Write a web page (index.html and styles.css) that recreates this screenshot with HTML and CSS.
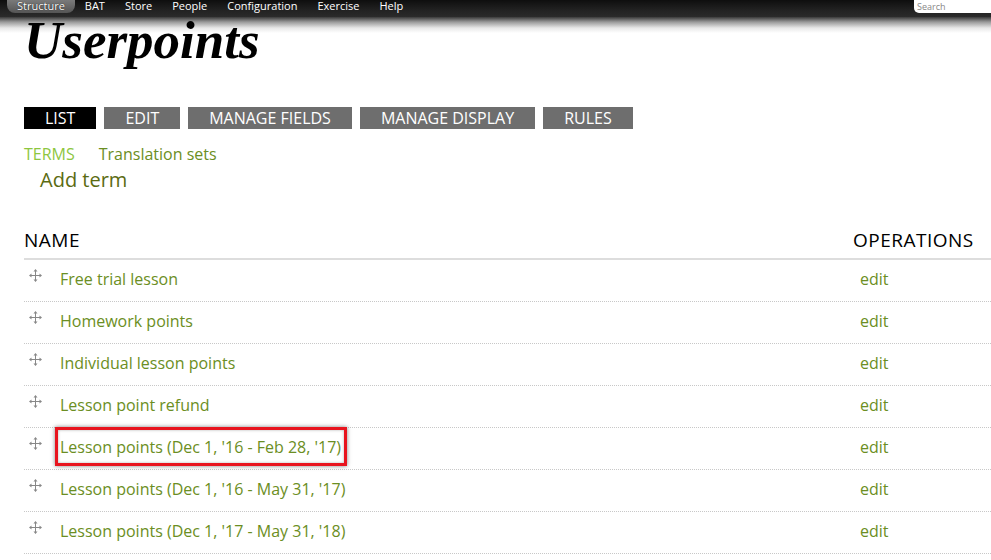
FILE: index.html
```html
<!DOCTYPE html>
<html lang="en">
<head>
  <meta charset="UTF-8">
  <title>Userpoints</title>
  <link rel="stylesheet" href="styles.css">
</head>
<body>
  <!-- Admin toolbar -->
  <div class="toolbar">
    <ul class="toolbar-menu">
      <li class="active">Structure</li>
      <li>BAT</li>
      <li>Store</li>
      <li>People</li>
      <li>Configuration</li>
      <li>Exercise</li>
      <li>Help</li>
    </ul>
    <input class="toolbar-search" type="text" placeholder="Search">
  </div>

  <div class="page">
    <h1 class="page-title">Userpoints</h1>

    <ul class="tabs">
      <li class="active">LIST</li>
      <li>EDIT</li>
      <li>MANAGE FIELDS</li>
      <li>MANAGE DISPLAY</li>
      <li>RULES</li>
    </ul>

    <ul class="subtabs">
      <li class="active">TERMS</li>
      <li>Translation sets</li>
    </ul>
    <div class="action-link">Add term</div>

    <div class="terms">
      <div class="terms-head">
        <div>NAME</div>
        <div>OPERATIONS</div>
      </div>
      <div class="term-row">
        <div class="term-name"><svg class="drag" viewBox="0 0 13 13"><path d="M6.5 1v11M1 6.5h11"/><path class="tip" d="M6.5 0l2 2.5h-4zM6.5 13l2-2.5h-4zM0 6.5l2.5-2v4zM13 6.5l-2.5-2v4z"/></svg><a>Free trial lesson</a></div>
        <div class="term-ops"><a>edit</a></div>
      </div>
      <div class="term-row">
        <div class="term-name"><svg class="drag" viewBox="0 0 13 13"><path d="M6.5 1v11M1 6.5h11"/><path class="tip" d="M6.5 0l2 2.5h-4zM6.5 13l2-2.5h-4zM0 6.5l2.5-2v4zM13 6.5l-2.5-2v4z"/></svg><a>Homework points</a></div>
        <div class="term-ops"><a>edit</a></div>
      </div>
      <div class="term-row">
        <div class="term-name"><svg class="drag" viewBox="0 0 13 13"><path d="M6.5 1v11M1 6.5h11"/><path class="tip" d="M6.5 0l2 2.5h-4zM6.5 13l2-2.5h-4zM0 6.5l2.5-2v4zM13 6.5l-2.5-2v4z"/></svg><a>Individual lesson points</a></div>
        <div class="term-ops"><a>edit</a></div>
      </div>
      <div class="term-row">
        <div class="term-name"><svg class="drag" viewBox="0 0 13 13"><path d="M6.5 1v11M1 6.5h11"/><path class="tip" d="M6.5 0l2 2.5h-4zM6.5 13l2-2.5h-4zM0 6.5l2.5-2v4zM13 6.5l-2.5-2v4z"/></svg><a>Lesson point refund</a></div>
        <div class="term-ops"><a>edit</a></div>
      </div>
      <div class="term-row">
        <div class="term-name"><svg class="drag" viewBox="0 0 13 13"><path d="M6.5 1v11M1 6.5h11"/><path class="tip" d="M6.5 0l2 2.5h-4zM6.5 13l2-2.5h-4zM0 6.5l2.5-2v4zM13 6.5l-2.5-2v4z"/></svg><a class="marked">Lesson points (Dec 1, '16 - Feb 28, '17)</a></div>
        <div class="term-ops"><a>edit</a></div>
      </div>
      <div class="term-row">
        <div class="term-name"><svg class="drag" viewBox="0 0 13 13"><path d="M6.5 1v11M1 6.5h11"/><path class="tip" d="M6.5 0l2 2.5h-4zM6.5 13l2-2.5h-4zM0 6.5l2.5-2v4zM13 6.5l-2.5-2v4z"/></svg><a>Lesson points (Dec 1, '16 - May 31, '17)</a></div>
        <div class="term-ops"><a>edit</a></div>
      </div>
      <div class="term-row">
        <div class="term-name"><svg class="drag" viewBox="0 0 13 13"><path d="M6.5 1v11M1 6.5h11"/><path class="tip" d="M6.5 0l2 2.5h-4zM6.5 13l2-2.5h-4zM0 6.5l2.5-2v4zM13 6.5l-2.5-2v4z"/></svg><a>Lesson points (Dec 1, '17 - May 31, '18)</a></div>
        <div class="term-ops"><a>edit</a></div>
      </div>
    </div>
  </div>
</body>
</html>
```

FILE: styles.css
```css
body {
  margin: 0;
  font-family: "Open Sans", Arial, sans-serif;
  background: #fff;
  overflow: hidden;
}

ul {
  list-style: none;
  margin: 0;
  padding: 0;
}

/* Toolbar */
.toolbar {
  height: 17px;
  background: linear-gradient(#0e0e0e, #222 60%, #2b2b2b);
  display: flex;
  justify-content: space-between;
  align-items: flex-start;
}

.toolbar-menu {
  display: flex;
  padding-left: 7px;
}

.toolbar-menu li {
  color: #fff;
  font-size: 11px;
  line-height: 11px;
  padding: 0 10px;
  height: 13px;
}

.toolbar-menu li.active {
  background: linear-gradient(#7a7a7a, #555);
  border-radius: 0 0 8px 8px;
  text-shadow: 0 0 1px #000;
}

.toolbar-search {
  width: 77px;
  height: 13px;
  box-sizing: border-box;
  border: none;
  border-radius: 0 0 0 5px;
  padding: 0 3px;
  font-family: "Open Sans", Arial, sans-serif;
  font-size: 9px;
  margin: 0;
}

.toolbar-search::placeholder {
  color: #888;
}

/* Page */
.page {
  background: linear-gradient(#3a3a3a 0, #9a9a9a 5px, #e8e8e8 11px, #fff 16px) no-repeat;
  background-size: 100% 16px;
  padding-left: 24px;
}

.page-title {
  margin: 0;
  font-family: "Liberation Serif", "DejaVu Serif", serif;
  font-style: italic;
  font-weight: bold;
  font-size: 53px;
  line-height: 46px;
  color: #000;
}

.tabs {
  display: flex;
  gap: 8px;
  margin-top: 44px;
}

.tabs li {
  background: #6e6e6e;
  color: #fff;
  font-size: 16px;
  line-height: 22px;
  height: 22px;
  padding: 0 21px;
}

.tabs li.active {
  background: #000;
}

.subtabs {
  display: flex;
  gap: 24px;
  margin-top: 14px;
  font-size: 16px;
  line-height: 22px;
  color: #6b8e23;
}

.subtabs li.active {
  color: #8dc63f;
}

.action-link {
  margin-left: 16px;
  margin-top: 2px;
  font-size: 20px;
  line-height: 26px;
  color: #5b6b12;
}

/* Terms table */
.terms {
  margin-top: 35px;
}

.terms-head,
.term-row {
  display: grid;
  grid-template-columns: 829px 1fr;
}

.terms-head {
  font-size: 19px;
  line-height: 24px;
  font-weight: 500;
  letter-spacing: 0.5px;
  color: #000;
  padding-bottom: 6px;
  border-bottom: 2px solid #ddd;
}

.term-row {
  height: 41px;
  border-bottom: 1px dotted #c8c8c8;
  align-items: center;
  font-size: 16px;
  color: #6b8e23;
}

.term-row > div {
  margin-bottom: 4px;
}

.term-name {
  display: flex;
  align-items: center;
}

.term-ops {
  padding-left: 7px;
}

.drag {
  width: 13px;
  height: 13px;
  margin: -6px 18px 0 5px;
  fill: none;
  stroke: #888;
  stroke-width: 1;
}

.drag .tip {
  fill: #888;
  stroke: none;
}

a {
  color: #6b8e23;
  cursor: pointer;
}

.marked {
  position: relative;
}

.marked::after {
  content: "";
  position: absolute;
  left: -5px;
  right: -6px;
  top: -9px;
  bottom: -8px;
  border: 3px solid #e8141e;
  box-shadow: 0 0 4px rgba(0, 0, 0, 0.5), inset 0 0 3px rgba(0, 0, 0, 0.3);
}
```
